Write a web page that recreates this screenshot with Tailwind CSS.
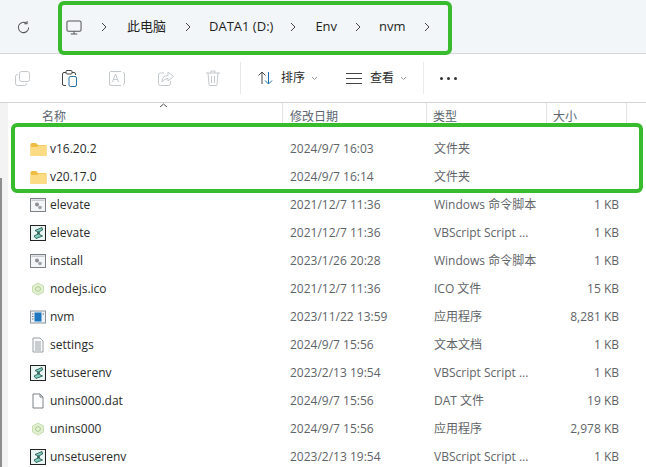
<!DOCTYPE html>
<html><head><meta charset="utf-8"><script src="https://cdn.jsdelivr.net/npm/@tailwindcss/browser@4"></script></head>
<body class="m-0 bg-white">
<svg width="0" height="0" class="absolute">
<defs>
<symbol id="folder" viewBox="0 0 17 15"><path d="M.5 2.5Q.5 1 2 1h4l2 2h7.5q1 0 1 1v9q0 1-1 1H1.5q-1 0-1-1z" fill="#eebd45"/><path d="M.5 5l6.5 0 2-1.500h6.500q1 0 1 1v8.500q0 1-1 1H1.500q-1 0-1-1z" fill="#fbdc85"/></symbol>
<symbol id="cmd" viewBox="0 0 16 16"><rect x=".5" y="1.500" width="15" height="13" fill="#f4f5f6" stroke="#7d8288"/><rect x="1.500" y="2.500" width="13" height="1.500" fill="#c5ccd3"/><circle cx="7" cy="7.500" r="2" fill="#8a8f95"/><circle cx="10" cy="10.500" r="1.800" fill="#9da2a8"/></symbol>
<symbol id="vbs" viewBox="0 0 16 16"><rect x=".5" y=".5" width="15" height="15" fill="#eaf6f4" stroke="#222"/><path d="M12 2.500 5 5.500l5 2.500-6 3 2 2.500 6.500-2.500-5.500-3 5.500-3z" fill="#7fd0c0" stroke="#1d4a42" stroke-width=".8"/></symbol>
<symbol id="node" viewBox="0 0 16 16"><path d="M8 2l5.500 3v6L8 14l-5.500-3V5z" fill="#e3efd3" stroke="#c6dfae"/><path d="M8 5.500l2.300 1.300v2.400L8 10.500 5.700 9.200V6.800z" fill="none" stroke="#a9cc8b"/></symbol>
<symbol id="exe" viewBox="0 0 16 16"><rect x=".5" y="2" width="15" height="12" fill="#eef2f6" stroke="#8b96a0"/><rect x="4.500" y="3.500" width="7" height="9" fill="#1c76c0"/><path d="M2 5h1.500M2 7.500h1.500M2 10h1.500M12.500 5H14" stroke="#6d7780"/></symbol>
<symbol id="txt" viewBox="0 0 16 16"><path d="M3 1h7l3 3v11H3z" fill="#f8f9fa" stroke="#9aa0a6"/><path d="M5 5h6M5 7h6M5 9h6M5 11h6M5 13h6" stroke="#9aa0a6"/></symbol>
<symbol id="dat" viewBox="0 0 16 16"><path d="M3 1h7l3 3v11H3z" fill="#fff" stroke="#7c8187"/><path d="M10 1v3h3" fill="none" stroke="#7c8187"/></symbol>
</defs>
</svg>
<div class="relative w-[646px] h-[467px] overflow-hidden text-[12px] text-[#1f1f1f]" style="font-family:'Open Sans','Noto Sans CJK SC',sans-serif">
  <!-- address bar -->
  <header class="h-[54px] flex items-center bg-[#f2f6f8] border-b border-[#d6d8da] pt-[1px]">
    <div class="w-[46px] flex justify-center"><svg width="15" height="15" viewBox="0 0 16 16" fill="none" stroke="#555" stroke-width="1.100"><path d="M13.500 8A5.500 5.500 0 1 1 11.500 3.700"/><path d="M11.800 1v3h-3"/></svg></div>
    <div class="ml-[20px] flex items-center text-[13px] h-full">
      <svg width="16" height="17" viewBox="0 0 17 17" fill="none" stroke="#555" stroke-width="1.100"><rect x="1" y="1.500" width="15" height="11" rx="1.500"/><path d="M5 15.500h7M8.500 12.500v3"/></svg>
      <svg class="ml-[19px]" width="6" height="10" viewBox="0 0 6 10" fill="none" stroke="#444"><path d="M1 1l4 4-4 4"/></svg>
      <span class="ml-[20px]">此电脑</span>
      <svg class="ml-[19px]" width="6" height="10" viewBox="0 0 6 10" fill="none" stroke="#444"><path d="M1 1l4 4-4 4"/></svg>
      <span class="ml-[18px]">DATA1 (D:)</span>
      <svg class="ml-[17px]" width="6" height="10" viewBox="0 0 6 10" fill="none" stroke="#444"><path d="M1 1l4 4-4 4"/></svg>
      <span class="ml-[19px]">Env</span>
      <svg class="ml-[18px]" width="6" height="10" viewBox="0 0 6 10" fill="none" stroke="#444"><path d="M1 1l4 4-4 4"/></svg>
      <span class="ml-[18px]">nvm</span>
      <svg class="ml-[18px]" width="6" height="10" viewBox="0 0 6 10" fill="none" stroke="#444"><path d="M1 1l4 4-4 4"/></svg>
    </div>
  </header>
  <!-- toolbar -->
  <div class="h-[49px] flex items-center border-b border-[#d4d4d4] pl-[15px] bg-white">
    <svg width="15" height="15" viewBox="0 0 15 15" fill="none" stroke="#c3c9cd"><rect x="4.500" y=".5" width="10" height="10" rx="2"/><path d="M3 3.500H2.500a2 2 0 0 0-2 2v7a2 2 0 0 0 2 2h7a2 2 0 0 0 2-2V12"/></svg>
    <svg class="ml-[32px]" width="15" height="17" viewBox="0 0 15 17" fill="none" stroke="#444"><path d="M4 2.500H2Q.5 2.500.5 4v10q0 1.500 1.500 1.500h2"/><path d="M10 2.500h2q1.500 0 1.500 1.500v1"/><rect x="4" y=".5" width="6" height="3.500" rx="1"/><rect x="7" y="6.500" width="7.500" height="10" rx="1.500" stroke="#2a74a8"/></svg>
    <svg class="ml-[32px]" width="16" height="15" viewBox="0 0 16 15" fill="none" stroke="#c3c9cd"><path d="M12 .5H2Q.5.500.5 2v11q0 1.500 1.500 1.500h10M14 1.500q1.500 0 1.500 1.500v9q0 1.500-1.500 1.500"/><path d="M3.500 11l3-8 3 8M4.500 8.500h4"/></svg>
    <svg class="ml-[33px]" width="16" height="15" viewBox="0 0 16 15" fill="none" stroke="#c3c9cd"><path d="M6 2H2.500Q.5 2 .5 4v8.500q0 2 2 2h8q2 0 2-2V10"/><path d="M10 1l5.500 4.500L10 10V7.500Q6 7.500 4 11q0-6.500 6-6.500z"/></svg>
    <svg class="ml-[32px]" width="14" height="16" viewBox="0 0 14 16" fill="none" stroke="#c3c9cd"><path d="M0 3h14M5 3V1h4v2M2 3l1 11.500q0 1 1 1h6q1 0 1-1L12 3M5.500 6v7M8.500 6v7"/></svg>
    <div class="ml-[20px] w-px h-[32px] bg-[#e8e8e8]"></div>
    <svg class="ml-[16px]" width="16" height="14" viewBox="0 0 16 14" fill="none" stroke="#444"><path d="M5 13V1M1.500 4.500 5 1l3.500 3.500"/><path d="M11.500 1v12M8 9.500l3.500 3.500L15 9.500" stroke="#1f6fb0"/></svg>
    <span class="ml-[8px] text-[#2a2a2a]">排序</span>
    <svg class="ml-[6px]" width="7" height="5" viewBox="0 0 7 5" fill="none" stroke="#9a9a9a"><path d="M1 1l2.500 2.500L6 1"/></svg>
    <svg class="ml-[28px]" width="16" height="11" viewBox="0 0 16 11" stroke="#444"><path d="M0 .5h16M0 5.500h16M0 10.500h16"/></svg>
    <span class="ml-[8px] text-[#2a2a2a]">查看</span>
    <svg class="ml-[6px]" width="7" height="5" viewBox="0 0 7 5" fill="none" stroke="#9a9a9a"><path d="M1 1l2.500 2.500L6 1"/></svg>
    <div class="ml-[16px] w-px h-[32px] bg-[#ececec]"></div>
    <div class="ml-[16px] flex gap-[4px]"><i class="block size-[3px] rounded-full bg-[#333]"></i><i class="block size-[3px] rounded-full bg-[#333]"></i><i class="block size-[3px] rounded-full bg-[#333]"></i></div>
  </div>
  <div class="flex h-[364px]">
    <aside class="w-[8px] bg-[#f3f3f3] flex justify-start"><div class="w-[2px] mt-[75px] h-[289px] bg-[#8e8e8e]"></div></aside>
    <main class="flex-1">
      <!-- column headers -->
      <div class="relative h-[20px] grid grid-cols-[275px_144px_120px_80px] text-[#5b6670]">
        <svg class="absolute left-[151px] top-0" width="9" height="5" viewBox="0 0 9 5" fill="none" stroke="#555"><path d="M1 4l3.500-3L8 4"/></svg>
        <div class="pl-[34px] pt-[6px] leading-[16px] border-r border-[#e5e5e5]">名称</div>
        <div class="pl-[7px] pt-[6px] leading-[16px] border-r border-[#e5e5e5]">修改日期</div>
        <div class="pl-[6px] pt-[6px] leading-[16px] border-r border-[#e5e5e5]">类型</div>
        <div class="pl-[6px] pt-[6px] leading-[16px] border-r border-[#e5e5e5]">大小</div>
      </div>
      <!-- rows -->
      <div class="pt-[12px]">
        <div class="h-[28px] grid grid-cols-[275px_151px_120px_65px] items-center text-[#5f6468]"><div class="flex items-center gap-[3px] pl-[22px] text-[#2a2a2a]"><svg width="17" height="15"><use href="#folder"/></svg>v16.20.2</div><div class="pl-[7px]">2024/9/7 16:03</div><div>文件夹</div><div class="text-right"></div></div>
        <div class="h-[28px] grid grid-cols-[275px_151px_120px_65px] items-center text-[#5f6468]"><div class="flex items-center gap-[3px] pl-[22px] text-[#2a2a2a]"><svg width="17" height="15"><use href="#folder"/></svg>v20.17.0</div><div class="pl-[7px]">2024/9/7 16:14</div><div>文件夹</div><div class="text-right"></div></div>
        <div class="h-[28px] grid grid-cols-[275px_151px_120px_65px] items-center text-[#5f6468]"><div class="flex items-center gap-[4px] pl-[22px] text-[#2a2a2a]"><svg width="16" height="16"><use href="#cmd"/></svg>elevate</div><div class="pl-[7px]">2021/12/7 11:36</div><div class="whitespace-nowrap">Windows 命令脚本</div><div class="text-right">1 KB</div></div>
        <div class="h-[28px] grid grid-cols-[275px_151px_120px_65px] items-center text-[#5f6468]"><div class="flex items-center gap-[4px] pl-[22px] text-[#2a2a2a]"><svg width="16" height="16"><use href="#vbs"/></svg>elevate</div><div class="pl-[7px]">2021/12/7 11:36</div><div class="whitespace-nowrap">VBScript Script ...</div><div class="text-right">1 KB</div></div>
        <div class="h-[28px] grid grid-cols-[275px_151px_120px_65px] items-center text-[#5f6468]"><div class="flex items-center gap-[4px] pl-[22px] text-[#2a2a2a]"><svg width="16" height="16"><use href="#cmd"/></svg>install</div><div class="pl-[7px]">2023/1/26 20:28</div><div class="whitespace-nowrap">Windows 命令脚本</div><div class="text-right">1 KB</div></div>
        <div class="h-[28px] grid grid-cols-[275px_151px_120px_65px] items-center text-[#5f6468]"><div class="flex items-center gap-[4px] pl-[22px] text-[#2a2a2a]"><svg width="16" height="16"><use href="#node"/></svg>nodejs.ico</div><div class="pl-[7px]">2021/12/7 11:36</div><div>ICO 文件</div><div class="text-right">15 KB</div></div>
        <div class="h-[28px] grid grid-cols-[275px_151px_120px_65px] items-center text-[#5f6468]"><div class="flex items-center gap-[4px] pl-[22px] text-[#2a2a2a]"><svg width="16" height="16"><use href="#exe"/></svg>nvm</div><div class="pl-[7px]">2023/11/22 13:59</div><div>应用程序</div><div class="text-right">8,281 KB</div></div>
        <div class="h-[28px] grid grid-cols-[275px_151px_120px_65px] items-center text-[#5f6468]"><div class="flex items-center gap-[4px] pl-[22px] text-[#2a2a2a]"><svg width="16" height="16"><use href="#txt"/></svg>settings</div><div class="pl-[7px]">2024/9/7 15:56</div><div>文本文档</div><div class="text-right">1 KB</div></div>
        <div class="h-[28px] grid grid-cols-[275px_151px_120px_65px] items-center text-[#5f6468]"><div class="flex items-center gap-[4px] pl-[22px] text-[#2a2a2a]"><svg width="16" height="16"><use href="#vbs"/></svg>setuserenv</div><div class="pl-[7px]">2023/2/13 19:54</div><div class="whitespace-nowrap">VBScript Script ...</div><div class="text-right">1 KB</div></div>
        <div class="h-[28px] grid grid-cols-[275px_151px_120px_65px] items-center text-[#5f6468]"><div class="flex items-center gap-[4px] pl-[22px] text-[#2a2a2a]"><svg width="16" height="16"><use href="#dat"/></svg>unins000.dat</div><div class="pl-[7px]">2024/9/7 15:56</div><div>DAT 文件</div><div class="text-right">19 KB</div></div>
        <div class="h-[28px] grid grid-cols-[275px_151px_120px_65px] items-center text-[#5f6468]"><div class="flex items-center gap-[4px] pl-[22px] text-[#2a2a2a]"><svg width="16" height="16"><use href="#node"/></svg>unins000</div><div class="pl-[7px]">2024/9/7 15:56</div><div>应用程序</div><div class="text-right">2,978 KB</div></div>
        <div class="h-[28px] grid grid-cols-[275px_151px_120px_65px] items-center text-[#5f6468]"><div class="flex items-center gap-[4px] pl-[22px] text-[#2a2a2a]"><svg width="16" height="16"><use href="#vbs"/></svg>unsetuserenv</div><div class="pl-[7px]">2023/2/13 19:54</div><div class="whitespace-nowrap">VBScript Script ...</div><div class="text-right">1 KB</div></div>
      </div>
    </main>
  </div>
  <!-- annotation frames -->
  <div class="absolute left-[58px] top-[1px] w-[394px] h-[54px] border-[4px] border-[#38bb2d] rounded-[6px]"></div>
  <div class="absolute left-[11px] top-[123px] w-[632px] h-[70px] border-[4px] border-[#38bb2d] rounded-[6px]"></div>
</div>
</body></html>
